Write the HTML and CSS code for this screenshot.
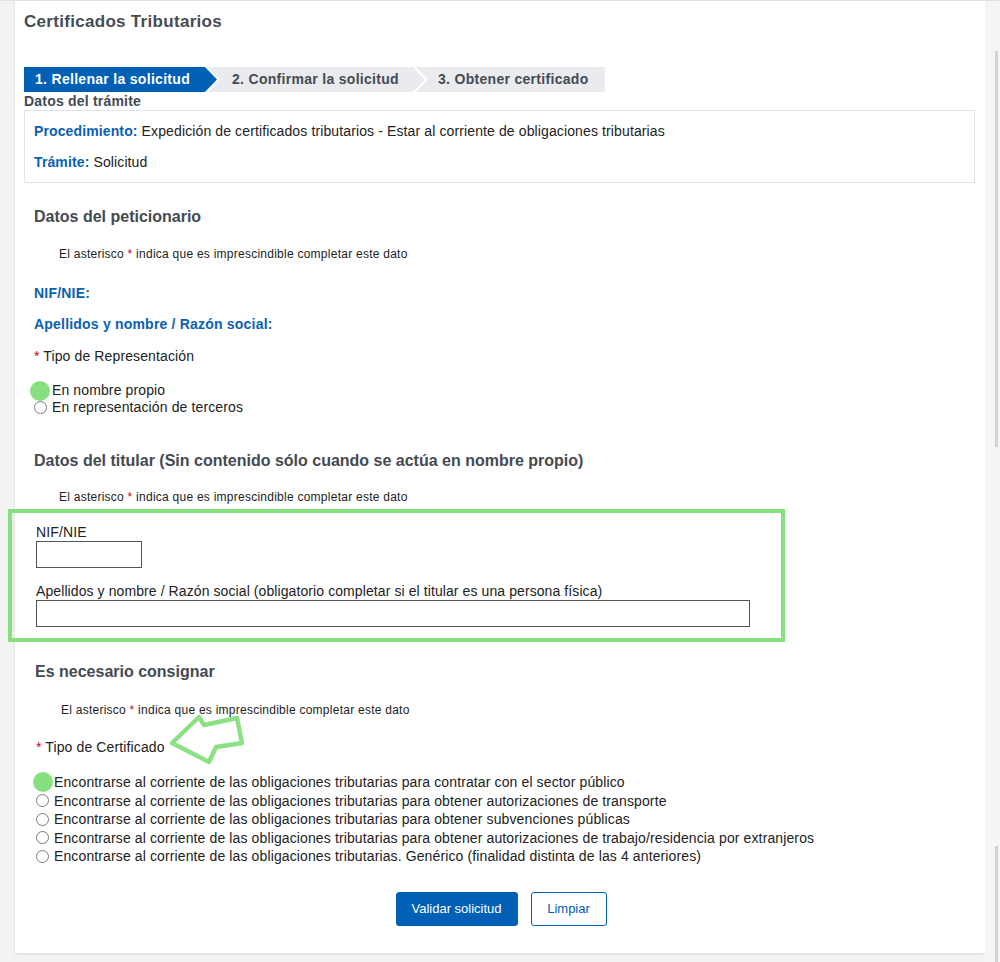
FILE: index.html
```html
<!DOCTYPE html>
<html lang="es">
    <head>
        <meta charset="UTF-8">
        <meta name="viewport" content="width=device-width, initial-scale=1.0">
        <title>Certificados Tributarios</title>
        <link rel="stylesheet" href="styles.css">
    </head>
<body>
    <div class="page">
        <main class="card">
            <h1 class="title">Certificados Tributarios</h1>

            <ol class="steps">
                <li class="step step-first active">1. Rellenar la solicitud</li>
                <li class="step step-mid">2. Confirmar la solicitud</li>
                <li class="step step-last">3. Obtener certificado</li>
            </ol>

            <div class="box-title">Datos del trámite</div>
            <div class="info-box">
                <p><span class="key">Procedimiento:</span> Expedición de certificados tributarios - Estar al corriente de obligaciones tributarias</p>
                <p><span class="key">Trámite:</span> Solicitud</p>
            </div>

            <section class="section">
                <h2 class="section-title">Datos del peticionario</h2>
                <p class="note">El asterisco <span class="req">*</span> indica que es imprescindible completar este dato</p>
                <p class="key-line">NIF/NIE:</p>
                <p class="key-line key-line-second">Apellidos y nombre / Razón social:</p>
                <p class="field-label"><span class="req">*</span> Tipo de Representación</p>
                <div class="radio-list">
                    <label class="radio-row"><input type="radio" name="repr" checked>En nombre propio</label>
                    <label class="radio-row"><input type="radio" name="repr">En representación de terceros</label>
                </div>
            </section>

            <section class="section section-titular">
                <h2 class="section-title">Datos del titular (Sin contenido sólo cuando se actúa en nombre propio)</h2>
                <p class="note">El asterisco <span class="req">*</span> indica que es imprescindible completar este dato</p>
            </section>

            <div class="highlight">
                <label class="input-label" for="nif">NIF/NIE</label>
                <input class="text-input text-input-short" type="text" id="nif">
                <label class="input-label input-label-second" for="nombre">Apellidos y nombre / Razón social (obligatorio completar si el titular es una persona física)</label>
                <input class="text-input text-input-long" type="text" id="nombre">
            </div>

            <section class="section section-cert">
                <h2 class="section-title">Es necesario consignar</h2>
                <p class="note">El asterisco <span class="req">*</span> indica que es imprescindible completar este dato</p>
                <p class="field-label field-label-cert"><span class="req">*</span> Tipo de Certificado
                    <svg class="arrow" width="90" height="62" viewBox="0 0 90 62">
                        <polygon points="8,33 35,7 40,15 73,8 78,33 52,37 45,52" fill="none" stroke="#86e07f" stroke-width="4.5" stroke-linejoin="round"/>
                    </svg>
                </p>
                <div class="radio-list radio-list-cert">
                    <label class="radio-row"><input type="radio" name="cert" checked>Encontrarse al corriente de las obligaciones tributarias para contratar con el sector público</label>
                    <label class="radio-row"><input type="radio" name="cert">Encontrarse al corriente de las obligaciones tributarias para obtener autorizaciones de transporte</label>
                    <label class="radio-row"><input type="radio" name="cert">Encontrarse al corriente de las obligaciones tributarias para obtener subvenciones públicas</label>
                    <label class="radio-row"><input type="radio" name="cert">Encontrarse al corriente de las obligaciones tributarias para obtener autorizaciones de trabajo/residencia por extranjeros</label>
                    <label class="radio-row"><input type="radio" name="cert">Encontrarse al corriente de las obligaciones tributarias. Genérico (finalidad distinta de las 4 anteriores)</label>
                </div>
            </section>

            <div class="actions">
                <button class="btn btn-primary" type="button">Validar solicitud</button>
                <button class="btn btn-outline" type="button">Limpiar</button>
            </div>
        </main>
        <div class="gutter"></div>
    </div>
</body>
</html>
```

FILE: styles.css
```css
body {
    margin: 0;
    background-color: #f3f3f3;
    border-top: 1px solid #e2e2e2;
    font-family: "Liberation Sans", Arial, sans-serif;
    color: #222;
    font-size: 14px;
    letter-spacing: .12px;
}

p {
    margin: 0;
}

.page {
    display: flex;
    align-items: flex-start;
    height: 961px;
}

.card {
    width: 970px;
    margin-left: 15px;
    box-sizing: border-box;
    padding: 11px 10px 27px 9px;
    background-color: #fff;
    box-shadow: 0 1px 3px rgba(0, 0, 0, .12);
}

.title {
    margin: 0;
    font-size: 17px;
    line-height: 20px;
    font-weight: bold;
    color: #464c54;
    letter-spacing: .3px;
}

/* pasos del asistente */
.steps {
    display: flex;
    list-style: none;
    margin: 35px 0 0 0;
    padding: 0;
    height: 25px;
}

.step {
    height: 25px;
    line-height: 25px;
    font-size: 14px;
    font-weight: bold;
    color: #444b55;
    background-color: #e9ebee;
    box-sizing: border-box;
    padding-left: 24px;
    white-space: nowrap;
    letter-spacing: .3px;
}

.step.active {
    background-color: #0060b5;
    color: #fff;
}

.step-first {
    width: 193px;
    padding-left: 11px;
    clip-path: polygon(0 0, calc(100% - 12px) 0, 100% 50%, calc(100% - 12px) 100%, 0 100%);
}

.step-mid {
    width: 217px;
    margin-left: -9px;
    clip-path: polygon(0 0, calc(100% - 12px) 0, 100% 50%, calc(100% - 12px) 100%, 0 100%, 12px 50%);
}

.step-last {
    width: 189px;
    margin-left: -9px;
    padding-left: 22px;
    clip-path: polygon(0 0, 100% 0, 100% 100%, 0 100%, 12px 50%);
}

.box-title {
    font-size: 14px;
    line-height: 18px;
    font-weight: bold;
    color: #444b55;
    letter-spacing: .2px;
}

.info-box {
    border: 1px solid #dde5ec;
    padding: 10px 9px 10px 9px;
    display: flex;
    flex-direction: column;
    gap: 11px;
    line-height: 20px;
}

.key {
    color: #0b5fb3;
    font-weight: bold;
}

/* bloques del formulario */
.section {
    padding-left: 10px;
}

.section-title {
    margin: 24px 0 0 0;
    font-size: 16px;
    line-height: 20px;
    font-weight: bold;
    color: #444a52;
    letter-spacing: 0;
}

.section-titular .section-title {
    margin-top: 35px;
}

.section-cert {
    padding-left: 11px;
}

.section-cert .section-title {
    margin-top: 20px;
}

.note {
    margin-top: 19px;
    padding-left: 25px;
    font-size: 12px;
    line-height: 16px;
    color: #222;
    letter-spacing: .25px;
}

.section-titular .note {
    margin-top: 18px;
}

.section-cert .note {
    margin-top: 20px;
    padding-left: 26px;
}

.req {
    color: #d0021b;
}

.key-line {
    margin-top: 22px;
    line-height: 18px;
    color: #0b5fb3;
    font-weight: bold;
    letter-spacing: .2px;
}

.key-line-second {
    margin-top: 13px;
}

.field-label {
    margin-top: 14px;
    line-height: 18px;
}

.field-label-cert {
    position: relative;
    margin-top: 20px;
    margin-left: 1px;
}

.arrow {
    position: absolute;
    left: 128px;
    top: -28px;
    opacity: .95;
}

.radio-list {
    margin-top: 17px;
    display: flex;
    flex-direction: column;
}

.radio-row {
    display: flex;
    align-items: center;
    line-height: 17px;
    white-space: nowrap;
}

.radio-list-cert {
    margin-left: 1px;
}

.radio-list-cert .radio-row {
    line-height: 18.5px;
}

.radio-row input {
    appearance: none;
    -webkit-appearance: none;
    flex: none;
    width: 13px;
    height: 13px;
    margin: 0 5px 0 0;
    border: 1.5px solid #7c7a89;
    border-radius: 50%;
    box-sizing: border-box;
    background-color: #fff;
}

.radio-row input:checked {
    width: 20px;
    height: 20px;
    margin: -2px 2px -2px -4px;
    border: none;
    background-color: #86e07f;
}

.radio-list-cert .radio-row input:checked {
    margin-left: -3px;
    margin-right: 1px;
}

/* recuadro resaltado */
.highlight {
    margin-left: -16px;
    margin-top: 4px;
    width: 777px;
    box-sizing: border-box;
    border: 4px solid #86e07f;
    padding: 10px 24px 11px 24px;
    display: flex;
    flex-direction: column;
    align-items: flex-start;
}

.input-label {
    line-height: 18px;
}

.input-label-second {
    margin-top: 15px;
    line-height: 17px;
    letter-spacing: .09px;
}

.text-input {
    height: 27px;
    box-sizing: border-box;
    border: 1px solid #50555c;
    border-radius: 0;
    padding: 2px 6px;
    font-family: inherit;
    font-size: 14px;
    margin: 0;
}

.text-input-short {
    width: 106px;
}

.text-input-long {
    width: 714px;
}

.actions {
    display: flex;
    justify-content: center;
    gap: 13px;
    margin-top: 26px;
    padding-left: 3px;
}

.btn {
    height: 34px;
    border-radius: 3px;
    font-family: "Liberation Sans", Arial, sans-serif;
    font-size: 13px;
    letter-spacing: 0;
    cursor: pointer;
    box-sizing: border-box;
}

.btn-primary {
    width: 122px;
    background-color: #0060b5;
    border: 1px solid #0060b5;
    color: #fff;
}

.btn-outline {
    width: 76px;
    background-color: #fff;
    border: 1px solid #0060b5;
    color: #0060b5;
}

.gutter {
    width: 15px;
    height: 961px;
    background-color: #f5f5f5;
    background-image: linear-gradient(to bottom, transparent 50px, #d2d2d2 50px, #d2d2d2 446px, transparent 446px, transparent 845px, #d2d2d2 845px);
    background-size: 3px 100%;
    background-position: 10px 0;
    background-repeat: no-repeat;
}
```
